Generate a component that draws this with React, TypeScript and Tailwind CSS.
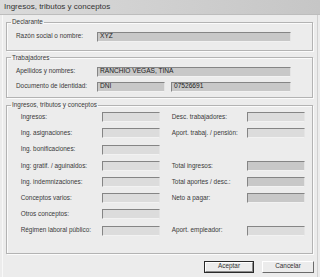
import React from "react";

const font = { fontFamily: '"Liberation Sans", Arial, sans-serif' };

function Field({ w, dark, value }: { w: string; dark?: boolean; value?: string }) {
  return (
    <div
      className={`${w} h-[10px] shrink-0 border-t border-l border-t-[#858585] border-l-[#858585] border-r border-b border-r-[#e4e4e4] border-b-[#f2f2f2] ${dark ? "bg-[#c8c8c8]" : "bg-[#dcdcdc]"} flex items-center pl-[2px] text-[6.6px] leading-none text-[#222]`}
    >
      {value}
    </div>
  );
}

function Label({ w, children, className = "" }: { w: string; children?: React.ReactNode; className?: string }) {
  return (
    <div className={`${w} shrink-0 text-[6.4px] leading-none text-[#3a3a3a] whitespace-nowrap ${className}`}>{children}</div>
  );
}

function Group({ title, children, className = "" }: { title: string; children: React.ReactNode; className?: string }) {
  return (
    <fieldset
      className={`ml-[3px] w-[307px] border border-[#b3b3b3] shadow-[inset_1px_1px_0_#fbfbfb,1px_1px_0_#fbfbfb] pl-[4px] ${className}`}
    >
      <legend className="px-[1px] text-[6.4px] leading-[8px] text-[#3a3a3a]">{title}</legend>
      {children}
    </fieldset>
  );
}

const rows: [string, string | null, boolean][] = [
  ["Ingresos:", "Desc. trabajadores:", false],
  ["Ing. asignaciones:", "Aport. trabaj. / pensión:", false],
  ["Ing. bonificaciones:", null, false],
  ["Ing: gratif. / aguinaldos:", "Total ingresos:", true],
  ["Ing. indemnizaciones:", "Total aportes / desc.:", true],
  ["Conceptos varios:", "Neto a pagar:", true],
  ["Otros conceptos:", null, false],
  ["Régimen laboral público:", "Aport. empleador:", false],
];

export default function App() {
  return (
    <div style={font} className="w-[320px] h-[277px] bg-[#ececec] flex flex-col overflow-hidden">
      <div className="h-[15px] shrink-0 bg-gradient-to-r from-[#dadada] to-[#c6c6c6] border-b border-[#bdbdbd] flex items-center pl-[4px] text-[8px] leading-none text-[#333]">
        Ingresos, tributos y conceptos
      </div>
      <div className="flex-1 flex flex-col border-l border-r border-l-[#f8f8f8] border-r-[#d0d0d0] mx-[2px]">
        <Group title="Declarante" className="mt-[3px] pt-[5.5px] pb-[8.5px]">
          <div className="flex items-center pl-[5px]">
            <Label w="w-[81px]">Razón social o nombre:</Label>
            <Field w="w-[194px]" dark value="XYZ" />
          </div>
        </Group>
        <Group title="Trabajadores" className="mt-[2.5px] pt-[5px] pb-[5.5px]">
          <div className="flex flex-col gap-[5px] pl-[5px]">
            <div className="flex items-center">
              <Label w="w-[81px]">Apellidos y nombres:</Label>
              <Field w="w-[194px]" dark value="RANCHIO VEGAS, TINA" />
            </div>
            <div className="flex items-center">
              <Label w="w-[81px]">Documento de identidad:</Label>
              <Field w="w-[68px]" dark value="DNI" />
              <div className="w-[6px]" />
              <Field w="w-[120px]" dark value="07526691" />
            </div>
          </div>
        </Group>
        <Group title="Ingresos, tributos y conceptos" className="mt-[3px] pt-[3.3px] pb-[17px]">
          <div className="flex flex-col gap-[6.2px] pl-[9.7px]">
            {rows.map(([l, r, dark], i) => (
              <div key={i} className="flex items-center">
                <Label w="w-[81.3px]">{l}</Label>
                <Field w="w-[58px]" />
                <Label w="w-[75.6px]" className="ml-[11.7px]">{r ?? ""}</Label>
                {r ? <Field w="w-[58px]" dark={dark} /> : null}
              </div>
            ))}
          </div>
        </Group>
        <div className="flex justify-end gap-[8px] mt-[7px] pr-[3px]">
          <button className="w-[50px] h-[12px] border border-[#2a2a2a] bg-[#ececec] flex items-center justify-center text-[6.4px] leading-none text-[#333]">
            <span className="w-full h-full flex items-center justify-center border-t border-l border-t-[#ffffff] border-l-[#ffffff] border-b border-r border-b-[#8a8a8a] border-r-[#8a8a8a]">Aceptar</span>
          </button>
          <button className="w-[52px] h-[12px] border-t border-l border-t-[#ffffff] border-l-[#ffffff] border-b border-r border-b-[#6a6a6a] border-r-[#6a6a6a] bg-[#ececec] flex items-center justify-center text-[6.4px] leading-none text-[#333]">
            Cancelar
          </button>
        </div>
      </div>
    </div>
  );
}
